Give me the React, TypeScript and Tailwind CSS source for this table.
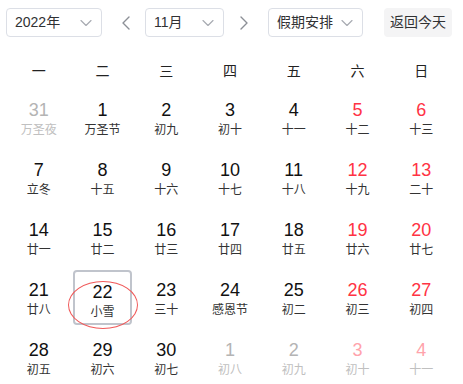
import { ChevronDown, ChevronLeft, ChevronRight } from 'lucide-react'

type Day = { d: number; lunar: string; other?: boolean }

const weeks: Day[][] = [
  [
    { d: 31, lunar: '万圣夜', other: true },
    { d: 1, lunar: '万圣节' },
    { d: 2, lunar: '初九' },
    { d: 3, lunar: '初十' },
    { d: 4, lunar: '十一' },
    { d: 5, lunar: '十二' },
    { d: 6, lunar: '十三' },
  ],
  [
    { d: 7, lunar: '立冬' },
    { d: 8, lunar: '十五' },
    { d: 9, lunar: '十六' },
    { d: 10, lunar: '十七' },
    { d: 11, lunar: '十八' },
    { d: 12, lunar: '十九' },
    { d: 13, lunar: '二十' },
  ],
  [
    { d: 14, lunar: '廿一' },
    { d: 15, lunar: '廿二' },
    { d: 16, lunar: '廿三' },
    { d: 17, lunar: '廿四' },
    { d: 18, lunar: '廿五' },
    { d: 19, lunar: '廿六' },
    { d: 20, lunar: '廿七' },
  ],
  [
    { d: 21, lunar: '廿八' },
    { d: 22, lunar: '小雪' },
    { d: 23, lunar: '三十' },
    { d: 24, lunar: '感恩节' },
    { d: 25, lunar: '初二' },
    { d: 26, lunar: '初三' },
    { d: 27, lunar: '初四' },
  ],
  [
    { d: 28, lunar: '初五' },
    { d: 29, lunar: '初六' },
    { d: 30, lunar: '初七' },
    { d: 1, lunar: '初八', other: true },
    { d: 2, lunar: '初九', other: true },
    { d: 3, lunar: '初十', other: true },
    { d: 4, lunar: '十一', other: true },
  ],
]

const weekdays = ['一', '二', '三', '四', '五', '六', '日']

function Select({ label, width }: { label: string; width: string }) {
  return (
    <div
      className={`${width} h-[29px] flex items-center justify-between pl-[8px] pr-[5px] border border-[#dcdfe6] rounded-[4px] bg-white`}
    >
      <span className="text-[14px] text-[#303133]">{label}</span>
      <ChevronDown size={20} strokeWidth={1.4} className="text-[#a8abb2]" />
    </div>
  )
}

function Cell({ day, col, selected }: { day: Day; col: number; selected: boolean }) {
  const weekend = col >= 5
  let numColor = weekend ? 'text-[#ff3344]' : 'text-[#111]'
  let lunarColor = 'text-[#333]'
  if (day.other) {
    numColor = weekend ? 'text-[#ffa3ab]' : 'text-[#b4b4b4]'
    lunarColor = 'text-[#c0c0c0]'
  }
  return (
    <div className="flex justify-center h-[60px]">
      <div
        className={`relative w-[59px] h-[55px] flex flex-col items-center pt-[9px] rounded-[4px] ${
          selected ? 'border-2 border-[#c0c4cc] pt-[7px]' : ''
        }`}
      >
        <span className={`text-[18px] leading-[22px] ${numColor}`}>{day.d}</span>
        <span className={`text-[12px] leading-[18px] ${lunarColor}`}>{day.lunar}</span>
        {selected && (
          <div className="absolute left-[-7px] top-[9px] w-[70px] h-[48px] rounded-[50%] border border-[#f05a5a]" />
        )}
      </div>
    </div>
  )
}

export default function App() {
  return (
    <div
      className="w-[463px] h-[384px] bg-white overflow-hidden"
      style={{ fontFamily: '"Liberation Sans", "Noto Sans CJK SC", sans-serif' }}
    >
      <div className="flex items-center pt-[8px] pl-[6px]">
        <Select label="2022年" width="w-[96px]" />
        <div className="w-[24px] ml-[12px] flex justify-center text-[#8c8f96]">
          <ChevronLeft size={24} strokeWidth={1.4} />
        </div>
        <div className="ml-[7px]">
          <Select label="11月" width="w-[79px]" />
        </div>
        <div className="w-[24px] ml-[8px] flex justify-center text-[#8c8f96]">
          <ChevronRight size={24} strokeWidth={1.4} />
        </div>
        <div className="ml-[12px]">
          <Select label="假期安排" width="w-[95px]" />
        </div>
        <button className="ml-[21px] w-[68px] h-[29px] rounded-[4px] bg-[#f4f4f5] text-[14px] text-[#303133]">
          返回今天
        </button>
      </div>

      <div className="pl-[7px] pr-[10px]">
        <div className="grid grid-cols-7 h-[38px] mt-[15px] items-center">
          {weekdays.map(w => (
            <span key={w} className="text-center text-[14px] text-[#222]">
              {w}
            </span>
          ))}
        </div>
        {weeks.map((week, r) => (
          <div key={r} className="grid grid-cols-7">
            {week.map((day, c) => (
              <Cell key={c} day={day} col={c} selected={r === 3 && c === 1} />
            ))}
          </div>
        ))}
      </div>
    </div>
  )
}
